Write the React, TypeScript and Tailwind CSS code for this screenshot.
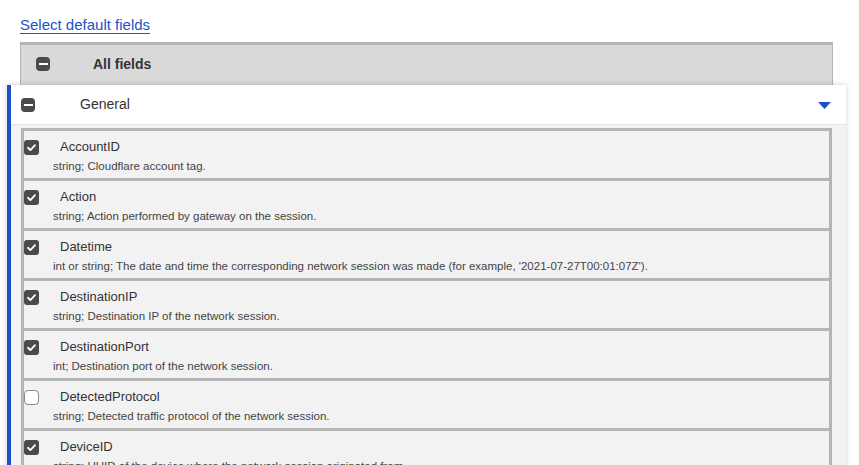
import React from 'react';

type Field = {
    name: string;
    description: string;
    checked: boolean;
};

const fields: Field[] = [
    { name: 'AccountID', description: 'string; Cloudflare account tag.', checked: true },
    { name: 'Action', description: 'string; Action performed by gateway on the session.', checked: true },
    { name: 'Datetime', description: "int or string; The date and time the corresponding network session was made (for example, '2021-07-27T00:01:07Z').", checked: true },
    { name: 'DestinationIP', description: 'string; Destination IP of the network session.', checked: true },
    { name: 'DestinationPort', description: 'int; Destination port of the network session.', checked: true },
    { name: 'DetectedProtocol', description: 'string; Detected traffic protocol of the network session.', checked: false },
    { name: 'DeviceID', description: 'string; UUID of the device where the network session originated from.', checked: true },
];

const MinusBox = () => (
    <span className="flex h-[14px] w-[14px] items-center justify-center rounded-[4px] bg-[#4b4b4b]">
        <span className="h-[2px] w-[9px] bg-white" />
    </span>
);

const CheckBox = ({ checked }: { checked: boolean }) =>
    checked ? (
        <span className="flex h-[15px] w-[15px] items-center justify-center rounded-[3px] bg-[#4b4b4b]">
            <svg width="11" height="11" viewBox="0 0 12 12" fill="none">
                <path d="M2.2 6.3 L4.8 8.8 L9.8 3.4" stroke="white" strokeWidth="2" strokeLinecap="round" strokeLinejoin="round" />
            </svg>
        </span>
    ) : (
        <span className="h-[15px] w-[15px] rounded-[4px] border border-[#8a8a8a] bg-white" />
    );

const FieldRow = ({ field }: { field: Field }) => (
    <div className="box-border h-[50px] border-x-[3px] border-t-[3px] border-[#b5b5b5] bg-[#f2f2f2]">
        <div className="mt-[5px] flex h-[22px] items-center">
            <CheckBox checked={field.checked} />
            <span className="ml-[21px] text-[13px] text-[#333]">{field.name}</span>
        </div>
        <div className="flex h-[18px] items-center whitespace-nowrap pl-[29px] text-[11.5px] text-[#444]">{field.description}</div>
    </div>
);

export default function App() {
    return (
        <div className="h-[465px] w-[859px] overflow-hidden bg-white font-['Liberation_Sans',Arial,sans-serif]">
            <div className="pl-[20px] pt-[15px] text-[15px] leading-[20px]">
                <a href="#" className="text-[#2152c9] underline decoration-1 underline-offset-[3px]">
                    Select default fields
                </a>
            </div>
            <div className="ml-[20px] mt-[7px] h-[43px] w-[813px] border-x border-t-[3px] border-[#b5b5b5] bg-[#d9d9d9]">
                <div className="flex h-[40px] items-center pb-[2px]">
                    <span className="ml-[15px]"><MinusBox /></span>
                    <span className="ml-[43px] text-[14px] font-bold text-[#333]">All fields</span>
                </div>
            </div>
            <div className="ml-[7px] w-[839px] border-l-4 border-[#1f4fc8] bg-[#f2f2f2] shadow-[0_0_6px_rgba(0,0,0,0.18)]">
                <div className="flex h-[40px] items-center border-b border-[#e4e4e4] bg-white">
                    <span className="ml-[10px]"><MinusBox /></span>
                    <span className="ml-[45px] text-[14px] text-[#333]">General</span>
                    <svg className="ml-auto mr-[15px] mt-[2px]" width="13" height="7" viewBox="0 0 13 7">
                        <path d="M0 0 H13 L6.5 7 Z" fill="#1f4fc8" />
                    </svg>
                </div>
                <div className="ml-[10px] mr-[14px] pt-[3px]">
                    {fields.map((f) => (
                        <FieldRow key={f.name} field={f} />
                    ))}
                </div>
            </div>
        </div>
    );
}
